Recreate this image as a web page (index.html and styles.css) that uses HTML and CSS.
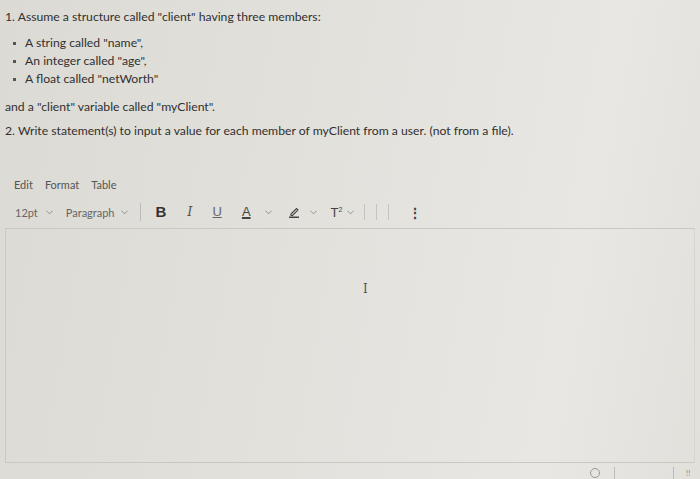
FILE: index.html
```html
<!DOCTYPE html>
<html>
<head>
<meta charset="utf-8">
<link rel="stylesheet" href="styles.css">
</head>
<body>
<div class="page">
  <p class="q1">1. Assume a structure called "client" having three members:</p>
  <ul class="members">
    <li>A string called "name",</li>
    <li>An integer called "age",</li>
    <li>A float called "netWorth"</li>
  </ul>
  <p class="and">and a "client" variable called "myClient".</p>
  <p class="q2">2. Write statement(s) to input a value for each member of myClient from a user. (not from a file).</p>

  <div class="menu">
    <span>Edit</span><span>Format</span><span>Table</span>
  </div>
  <div class="toolbar">
    <span class="size">12pt</span>
    <svg class="chev c1" viewBox="0 0 8 5"><path d="M0.5 0.5 L4 4 L7.5 0.5" /></svg>
    <span class="para">Paragraph</span>
    <svg class="chev c2" viewBox="0 0 8 5"><path d="M0.5 0.5 L4 4 L7.5 0.5" /></svg>
    <span class="sep"></span>
    <span class="btn b">B</span>
    <span class="btn i">I</span>
    <span class="btn u">U</span>
    <span class="btn a">A</span>
    <svg class="chev c3" viewBox="0 0 8 5"><path d="M0.5 0.5 L4 4 L7.5 0.5" /></svg>
    <svg class="pen" viewBox="0 0 12 12"><path d="M3 8 L8.5 2.5 L10 4 L4.5 9.5 L3 9.5 Z" /><path d="M1 11.3 H11" class="thick"/></svg>
    <svg class="chev c4" viewBox="0 0 8 5"><path d="M0.5 0.5 L4 4 L7.5 0.5" /></svg>
    <span class="btn t">T<sup>2</sup></span>
    <svg class="chev c5" viewBox="0 0 8 5"><path d="M0.5 0.5 L4 4 L7.5 0.5" /></svg>
    <span class="vline first"></span><span class="vline"></span><span class="vline"></span>
    <span class="dots">&#8942;</span>
  </div>
  <div class="editor">
    <span class="cursor">I</span>
  </div>
  <div class="status">
    <span class="circ"></span><span class="sline"></span><span class="sline far"></span><span class="mark">!!</span>
  </div>
</div>
</body>
</html>
```
FILE: styles.css
```css
html, body {
  margin: 0;
  padding: 0;
}
body {
  width: 700px;
  height: 479px;
  overflow: hidden;
  background: linear-gradient(100deg, #dcdad4 0%, #e2e1dc 45%, #e8e7e3 80%, #e1e0db 100%);
  font-family: Lato, "Open Sans", sans-serif;
  color: #303030;
}
.page {
  padding: 7px 0 0 5px;
  font-size: 12.2px;
}
p { margin: 0; }
.q1 { line-height: 20px; }
.members {
  margin: 7px 0 0 0;
  padding: 0 0 0 20px;
  list-style: none;
}
.members li {
  line-height: 18px;
  position: relative;
}
.members li::before {
  content: "";
  position: absolute;
  left: -12px;
  top: 8px;
  width: 3px;
  height: 3px;
  background: #555;
}
.and { margin-top: 9px; line-height: 20px; }
.q2 { margin-top: 4px; line-height: 20px; }

.menu {
  margin-top: 37px;
  padding-left: 9px;
  display: flex;
  gap: 12px;
  font-size: 11px;
  color: #555;
  line-height: 14px;
}
.toolbar {
  margin-top: 10px;
  padding-left: 10px;
  display: flex;
  align-items: center;
  height: 20px;
  font-size: 11px;
  color: #666;
}
.chev { width: 7px; height: 5px; fill: none; stroke: #888; stroke-width: 1; flex: none; }
.c1 { margin-left: 8px; }
.para { margin-left: 13px; }
.c2 { margin-left: 6px; }
.sep { width: 1px; height: 18px; background: #bbb; margin-left: 12px; }
.btn { font-size: 13px; color: #444; font-family: "Liberation Sans", Arial, sans-serif; line-height: 16px; }
.btn.b { font-weight: bold; font-size: 15px; color: #333; margin-left: 15px; }
.btn.i { font-style: italic; font-family: "DejaVu Serif", serif; font-weight: normal; color: #555; margin-left: 21px; }
.btn.u { text-decoration: underline; color: #666; margin-left: 20px; }
.btn.a { text-decoration: underline; text-decoration-thickness: 2px; color: #444; margin-left: 20px; }
.c3 { margin-left: 14px; }
.pen { width: 12px; height: 12px; fill: none; stroke: #444; stroke-width: 1.1; margin-left: 16px; flex: none; }
.pen .thick { stroke-width: 1.6; }
.c4 { margin-left: 10px; }
.btn.t { margin-left: 14px; }
.btn.t sup { font-size: 7px; }
.c5 { margin-left: 5px; }
.vline { width: 1px; height: 16px; background: #c4c4c0; margin-left: 11px; }
.vline.first { margin-left: 10px; }
.dots { margin-left: 19px; font-size: 14px; color: #444; font-weight: bold; }

.editor {
  margin-top: 6px;
  width: 690px;
  height: 235px;
  border: 1px solid #c9c8c2;
  border-right-color: #d6d5d0;
  box-sizing: border-box;
  position: relative;
}
.cursor {
  position: absolute;
  left: 357px;
  top: 53px;
  font-family: "DejaVu Serif", serif;
  font-size: 12px;
  color: #555;
}
.status {
  display: flex;
  align-items: center;
  height: 14px;
  padding-left: 585px;
  margin-top: 3px;
}
.circ { width: 8px; height: 8px; border: 1px solid #999; border-radius: 50%; }
.sline { width: 1px; height: 12px; background: #bbb; margin-left: 14px; }
.sline.far { margin-left: 58px; }
.mark { margin-left: 12px; font-size: 8px; color: #888; }
```
